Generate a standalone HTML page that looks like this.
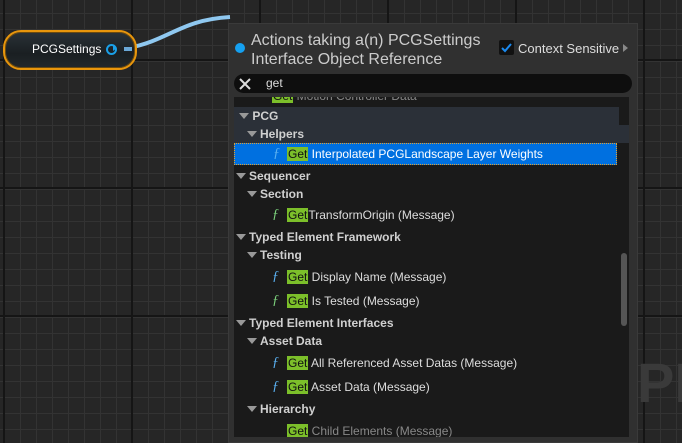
<!DOCTYPE html>
<html><head><style>
body{margin:0;width:682px;height:434px;overflow:hidden;position:relative;font-family:"Liberation Sans",sans-serif;
background-color:#262626;
background-image:
linear-gradient(90deg,#151515 0 2px,transparent 2px),
linear-gradient(0deg,#151515 0 2px,transparent 2px),
linear-gradient(90deg,#333 0 1px,transparent 1px),
linear-gradient(0deg,#333 0 1px,transparent 1px);
background-size:128px 128px,128px 128px,16px 16px,16px 16px;
background-position:3px 0,0 61px,4px 0,0 14px;}
.a{position:absolute;white-space:nowrap}
.panel{position:absolute;left:228px;top:23px;width:410px;height:420px;background:#303030;border:1px solid #3a3a3a;box-sizing:border-box}
.list{position:absolute;left:234px;top:97px;width:395px;height:340px;background:#1a1a1a;overflow:hidden}
.r{position:absolute;left:0;width:383px;font-size:12px;color:#ddd;line-height:18px}
.cat{font-weight:bold;color:#d0d0d0}
.tri{display:inline-block;width:0;height:0;border-left:5px solid transparent;border-right:5px solid transparent;border-top:6px solid #999;margin-right:3px;vertical-align:1px}
.f{position:absolute;font-family:"Liberation Serif",serif;font-style:italic;font-size:14px;color:#5ab0f0}
.g{background:#7cbf2a;color:#111;padding:0 1px}
</style></head><body>
<svg class="a" style="left:0;top:0" width="240" height="60"><path d="M128 48 C170 40,180 20,230 17" stroke="#8fc8f0" stroke-width="4" fill="none"/></svg>
<div class="a" style="left:3px;top:30px;width:130px;height:36px;border:2px solid #e8960c;border-radius:18px;background:linear-gradient(#2a3238,#1a1f22 60%,#22282b);box-shadow:inset 0 0 0 1px #6b4a10"></div>
<div class="a" style="left:32px;top:42px;font-size:12px;color:#fff">PCGSettings</div>
<div class="a" style="left:106px;top:44px;width:7px;height:7px;border:2px solid #1aa0e8;border-radius:50%"></div>
<div class="a" style="left:113px;top:45px;width:0;height:0;border-top:3px solid transparent;border-bottom:3px solid transparent;border-left:4px solid #1aa0e8"></div>
<div class="a" style="left:124px;top:47px;width:8px;height:4px;background:#6aa8d8"></div>
<div class="panel"></div>
<div class="a" style="left:235px;top:43px;width:10px;height:10px;border-radius:50%;background:#15a0f0"></div>
<div class="a" style="left:251px;top:31px;font-size:16px;color:#ccc;line-height:19px">Actions taking a(n) PCGSettings<br>Interface Object Reference</div>
<div class="a" style="left:499px;top:40px;width:15px;height:15px;background:#111;border-radius:2px"></div>
<svg class="a" style="left:499px;top:40px" width="15" height="15"><path d="M3 8 L6 11 L12 4" stroke="#1a8af0" stroke-width="2" fill="none"/></svg>
<div class="a" style="left:518px;top:41px;font-size:13px;color:#ddd">Context Sensitive</div>
<div class="a" style="left:623px;top:44px;border-top:4px solid transparent;border-bottom:4px solid transparent;border-left:5px solid #888"></div>
<div class="a" style="left:234px;top:74px;width:398px;height:19px;background:#0e0e0e;border-radius:10px"></div>
<svg class="a" style="left:239px;top:78px" width="12" height="12"><path d="M1 1L11 11M11 1L1 11" stroke="#ddd" stroke-width="2"/></svg>
<div class="a" style="left:266px;top:76px;font-size:12px;color:#ddd">get</div>
<div class="list">
<div class="r" style="top:-10px;left:38px;color:#888"><span class="g">Get</span> Motion Controller Data</div>
<div class="r cat" style="top:10px;height:18px;background:#2b3038;padding-left:2px">&nbsp;<span class="tri"></span>PCG</div>
<div class="r cat" style="top:28px;height:18px;background:#2b3038;padding-left:13px"><span class="tri"></span>Helpers</div>
<div class="r" style="top:46px;height:22px;background:#0070e0;border:1px dotted #e0a030;box-sizing:border-box;line-height:20px;color:#fff"><span class="f" style="left:38px;top:0">ƒ</span><span style="position:absolute;left:52px"><span class="g">Get</span> Interpolated PCGLandscape Layer Weights</span></div>
<div class="r cat" style="top:70px;padding-left:2px"><span class="tri"></span>Sequencer</div>
<div class="r cat" style="top:88px;padding-left:13px"><span class="tri"></span>Section</div>
<div class="r" style="top:109px"><span class="f" style="left:38px;color:#7cd07c">ƒ</span><span style="position:absolute;left:53px"><span class="g">Get</span>TransformOrigin (Message)</span></div>
<div class="r cat" style="top:131px;padding-left:2px"><span class="tri"></span>Typed Element Framework</div>
<div class="r cat" style="top:149px;padding-left:13px"><span class="tri"></span>Testing</div>
<div class="r" style="top:171px"><span class="f" style="left:38px">ƒ</span><span style="position:absolute;left:53px"><span class="g">Get</span> Display Name (Message)</span></div>
<div class="r" style="top:195px"><span class="f" style="left:38px;color:#7cd07c">ƒ</span><span style="position:absolute;left:53px"><span class="g">Get</span> Is Tested (Message)</span></div>
<div class="r cat" style="top:217px;padding-left:2px"><span class="tri"></span>Typed Element Interfaces</div>
<div class="r cat" style="top:235px;padding-left:13px"><span class="tri"></span>Asset Data</div>
<div class="r" style="top:257px"><span class="f" style="left:38px">ƒ</span><span style="position:absolute;left:53px"><span class="g">Get</span> All Referenced Asset Datas (Message)</span></div>
<div class="r" style="top:281px"><span class="f" style="left:38px">ƒ</span><span style="position:absolute;left:53px"><span class="g">Get</span> Asset Data (Message)</span></div>
<div class="r cat" style="top:303px;padding-left:13px"><span class="tri"></span>Hierarchy</div>
<div class="r" style="top:325px;color:#888"><span style="position:absolute;left:53px"><span class="g">Get</span> Child Elements (Message)</span></div>
<div class="a" style="left:387px;top:156px;width:6px;height:73px;background:#555;border-radius:3px"></div>
</div>
<div class="a" style="left:637px;top:350px;font-size:56px;font-weight:bold;color:#3a3a3a">PP</div>
</body></html>
